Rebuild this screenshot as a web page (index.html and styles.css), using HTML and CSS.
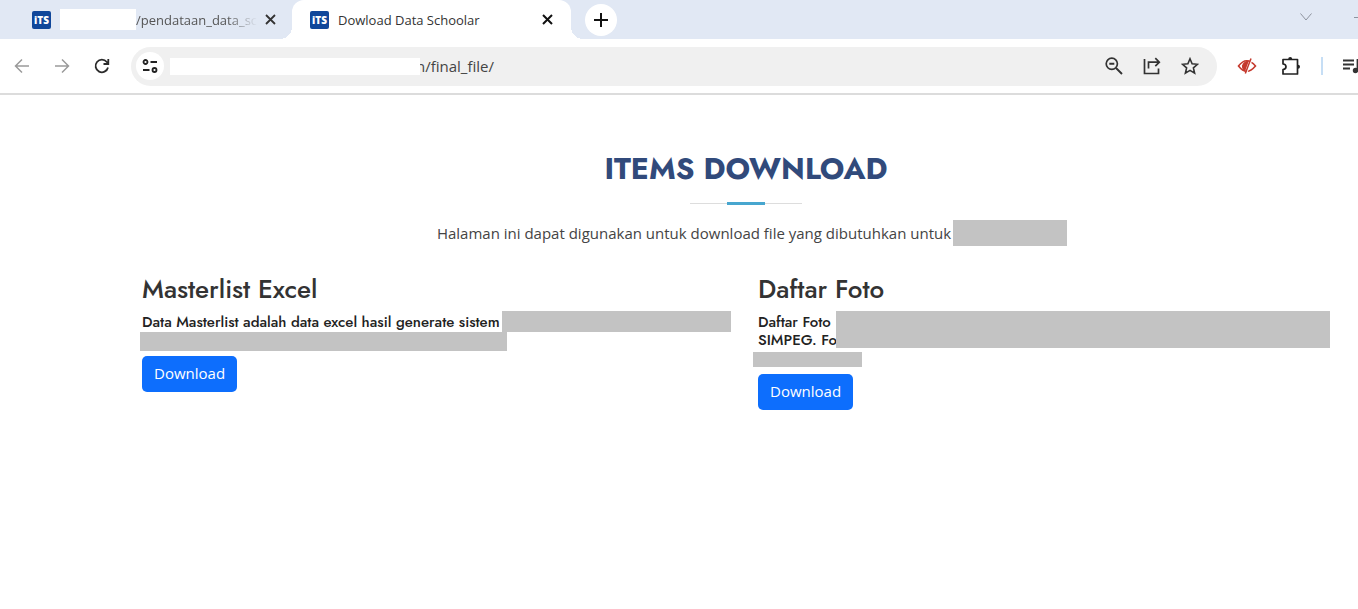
FILE: index.html
```html
<!DOCTYPE html>
<html lang="id">
<head>
  <meta charset="UTF-8">
  <meta name="viewport" content="width=device-width, initial-scale=1">
  <title>Dowload Data Schoolar</title>
  <link rel="stylesheet" href="styles.css">
</head>
<body>

  <header class="browser">
    <div class="tab-strip">
      <div class="tab">
        <span class="favicon">iTS</span>
        <span class="tab-mask"></span>
        <span class="tab-title tab-title-fade">/pendataan_data_sc</span>
        <button class="icon-btn tab-close" aria-label="Tutup tab">
          <svg width="11" height="11" viewBox="0 0 11 11"><path d="M1 1l9 9M10 1l-9 9" stroke="#333" stroke-width="1.8"/></svg>
        </button>
      </div>
      <div class="tab tab-active">
        <span class="favicon">iTS</span>
        <span class="tab-title">Dowload Data Schoolar</span>
        <button class="icon-btn tab-close" aria-label="Tutup tab">
          <svg width="11" height="11" viewBox="0 0 11 11"><path d="M1 1l9 9M10 1l-9 9" stroke="#111" stroke-width="2"/></svg>
        </button>
      </div>
      <button class="icon-btn new-tab" aria-label="Tab baru">
        <svg width="14" height="14" viewBox="0 0 14 14"><path d="M7 0v14M0 7h14" stroke="#111" stroke-width="2"/></svg>
      </button>
      <div class="window-controls">
        <button class="icon-btn" aria-label="Cari tab">
          <svg width="12" height="8" viewBox="0 0 12 8"><path d="M.5 .5L6 7l5.500-6.500" fill="none" stroke="#8d939e" stroke-width="1"/></svg>
        </button>
        <button class="icon-btn" aria-label="Minimalkan">
          <svg width="12" height="8" viewBox="0 0 12 8"><path d="M0 4.500h12" stroke="#8d939e"/></svg>
        </button>
      </div>
    </div>

    <div class="toolbar">
      <div class="nav-buttons">
        <button class="icon-btn" aria-label="Kembali">
          <svg width="16" height="16" viewBox="0 0 16 16"><path d="M15 8H2M8 1.500L1.500 8 8 14.500" fill="none" stroke="#9a9a9a" stroke-width="1.500"/></svg>
        </button>
        <button class="icon-btn" aria-label="Maju">
          <svg width="16" height="16" viewBox="0 0 16 16"><path d="M1 8h13M8 1.500L14.500 8 8 14.500" fill="none" stroke="#9a9a9a" stroke-width="1.500"/></svg>
        </button>
        <button class="icon-btn" aria-label="Muat ulang">
          <svg width="16" height="16" viewBox="0 0 16 16"><path d="M14 9.500A6.300 6.300 0 1 1 12.800 4l1.500 1.700M14.300 1v5H9.500" fill="none" stroke="#2b2b2b" stroke-width="1.800"/></svg>
        </button>
      </div>

      <div class="omnibox">
        <button class="icon-btn site-info" aria-label="Informasi situs">
          <svg width="16" height="14" viewBox="0 0 16 14" fill="none" stroke="#222" stroke-width="1.800"><circle cx="3.500" cy="3" r="2"/><path d="M8.500 3H15M1 11h6.500"/><circle cx="12.500" cy="11" r="2"/></svg>
        </button>
        <span class="url-mask"></span>
        <input class="url" type="text" value="n/final_file/" aria-label="Alamat">
        <div class="omnibox-actions">
          <button class="icon-btn" aria-label="Perkecil">
            <svg width="18" height="18" viewBox="0 0 18 18" fill="none" stroke="#333"><circle cx="6.800" cy="6.800" r="5.600" stroke-width="1.700"/><path d="M11 11l6 6M4.300 6.800h5" stroke-width="1.900"/></svg>
          </button>
          <button class="icon-btn" aria-label="Bagikan">
            <svg width="18" height="18" viewBox="0 0 18 18" fill="none" stroke="#333" stroke-width="1.700"><path d="M1.500 2v14.500h14V11.500M5.500 11.500V5.200H16M12.300 1.200l4 4-4 4"/></svg>
          </button>
          <button class="icon-btn" aria-label="Tandai halaman">
            <svg width="18" height="18" viewBox="0 0 18 18"><path d="M9 1.800l2.100 5 5.400.5-4.100 3.600 1.200 5.300L9 13.400l-4.600 2.800 1.200-5.300L1.500 7.300l5.400-.5z" fill="none" stroke="#333" stroke-width="1.600"/></svg>
          </button>
        </div>
      </div>

      <div class="extensions">
        <button class="icon-btn" aria-label="Ekstensi privasi">
          <svg width="20" height="16" viewBox="0 0 20 16"><path d="M1.500 8Q9.500-2.500 18.500 8 9.500 18.500 1.500 8z" fill="none" stroke="#c5392d" stroke-width="1.600"/><path d="M12 2.500L8 13.500Q4.500 11 5 7.500 6.500 3 12 2.500z" fill="#c5392d"/><path d="M15 1L9.500 15" stroke="#fff" stroke-width="1.500"/><path d="M14 0.500L8.300 15.500" stroke="#c5392d" stroke-width="1.500"/></svg>
        </button>
        <button class="icon-btn" aria-label="Ekstensi">
          <svg width="20" height="20" viewBox="0 0 20 20"><path d="M2 3.500h14.500v14.500H2v-4.400q3-.3 3-2.800T2 8z" fill="none" stroke="#222" stroke-width="1.700" stroke-linejoin="round"/><path d="M7.200 3a2 2 0 0 1 4 0zM17 8.800a2 2 0 0 1 0 4z" fill="#222"/></svg>
        </button>
        <span class="divider"></span>
        <button class="icon-btn" aria-label="Kontrol media">
          <svg width="20" height="16" viewBox="0 0 20 16"><path d="M0 2.500h11M0 6.500h11M0 10.500h7M14.500 12.500V2H19" fill="none" stroke="#333" stroke-width="1.800"/><circle cx="12.500" cy="12.500" r="2.700" fill="#333"/></svg>
        </button>
      </div>
    </div>
  </header>

  <main class="page">
    <section class="section-title">
      <h1>Items Download</h1>
      <p>Halaman ini dapat digunakan untuk download file yang dibutuhkan untuk <span class="mask mask-intro"></span></p>
    </section>

    <section class="items">
      <article class="item">
        <h2>Masterlist Excel</h2>
        <div class="desc">
          <p>Data Masterlist adalah data excel hasil generate sistem</p>
          <span class="mask mask-line"></span>
        </div>
        <span class="mask mask-second"></span>
        <button class="btn">Download</button>
      </article>

      <article class="item">
        <h2>Daftar Foto</h2>
        <div class="desc">
          <p class="desc-short">Daftar Foto<br>SIMPEG. Fo</p>
          <span class="mask mask-block"></span>
        </div>
        <span class="mask mask-third"></span>
        <button class="btn">Download</button>
      </article>
    </section>
  </main>

</body>
</html>
```

FILE: styles.css
```css
* {
  box-sizing: border-box;
}
body {
  margin: 0;
  overflow-x: hidden;
  background: #fff;
  color: #444;
  font-family: "Open Sans", "Noto Sans", sans-serif;
}
h1, h2, p {
  margin: 0;
}
button, input {
  font: inherit;
  border: 0;
  padding: 0;
  background: none;
}
.icon-btn {
  display: flex;
  align-items: center;
  justify-content: center;
  flex-shrink: 0;
}
svg {
  display: block;
}

/* browser bar */
.browser {
  overflow: hidden;
  border-bottom: 2px solid #dcdcdc;
}
.tab-strip {
  display: flex;
  align-items: center;
  height: 39px;
  background: #e1e8f4;
}
.tab {
  display: flex;
  align-items: center;
  width: 292px;
  height: 39px;
  padding: 0 16px 0 32px;
  font-size: 13px;
  color: #555;
}
.tab-active {
  position: relative;
  width: 279px;
  padding: 0 18px;
  background: #fff;
  color: #333;
  border-radius: 12px 12px 0 0;
}
.tab-active::before,
.tab-active::after {
  content: "";
  position: absolute;
  bottom: 0;
  width: 12px;
  height: 12px;
}
.tab-active::before {
  right: 100%;
  background: radial-gradient(circle at 0 0, transparent 12px, #fff 12px);
}
.tab-active::after {
  left: 100%;
  background: radial-gradient(circle at 100% 0, transparent 12px, #fff 12px);
}
.favicon {
  flex-shrink: 0;
  width: 19px;
  height: 18px;
  margin-right: 9px;
  border-radius: 2px;
  background: #10479a;
  color: #fff;
  font-size: 10px;
  font-weight: 800;
  line-height: 18px;
  text-align: center;
}
.tab-mask {
  flex-shrink: 0;
  width: 76px;
  height: 21px;
  background: #fff;
}
.tab-title {
  flex: 1;
  overflow: hidden;
  white-space: nowrap;
}
.tab-title-fade {
  -webkit-mask-image: linear-gradient(to right, #000 75%, transparent);
  mask-image: linear-gradient(to right, #000 75%, transparent);
}
.tab-close {
  width: 11px;
  margin-left: 8px;
}
.new-tab {
  width: 32px;
  height: 32px;
  margin-left: 14px;
  border-radius: 50%;
  background: #fff;
}
.window-controls {
  display: flex;
  gap: 42px;
  margin: 0 -8px 6px auto;
}
.toolbar {
  display: flex;
  align-items: center;
  height: 54px;
}
.nav-buttons {
  display: flex;
  gap: 24px;
  padding: 0 21px 0 14px;
}
.omnibox {
  display: flex;
  align-items: center;
  flex: 1;
  min-width: 0;
  height: 39px;
  padding: 0 18px 0 5px;
  border-radius: 20px;
  background: #f0f0f0;
}
.site-info {
  width: 28px;
  height: 28px;
  border-radius: 50%;
  background: #fff;
}
.url-mask {
  position: relative;
  z-index: 1;
  flex-shrink: 0;
  width: 250px;
  height: 17px;
  margin-left: 6px;
  background: #fff;
}
.url {
  flex: 1;
  min-width: 0;
  margin-left: -4px;
  color: #444;
  font-size: 15px;
  outline: none;
}
.omnibox-actions {
  display: flex;
  gap: 20px;
}
.extensions {
  display: flex;
  align-items: center;
  gap: 20px;
  margin: 0 -5px 0 20px;
}
.extensions .icon-btn:nth-child(2) {
  margin-left: 4px;
}
.divider {
  width: 2px;
  height: 18px;
  background: #c6def5;
}

/* page */
.page {
  padding: 53px 8px 40px 142px;
}
.section-title {
  text-align: center;
}
.section-title h1 {
  position: relative;
  padding-bottom: 16px;
  color: #314a7b;
  font-family: Jost, Lato, sans-serif;
  font-size: 30px;
  font-weight: 700;
  line-height: 42px;
  text-transform: uppercase;
}
.section-title h1::before,
.section-title h1::after {
  content: "";
  position: absolute;
  left: 50%;
  transform: translateX(-50%);
}
.section-title h1::before {
  bottom: 2px;
  width: 112px;
  height: 1px;
  background: #ddd;
}
.section-title h1::after {
  bottom: 1px;
  width: 38px;
  height: 3px;
  background: #47a6cf;
}
.section-title p {
  display: flex;
  align-items: center;
  justify-content: center;
  gap: 2px;
  height: 26px;
  margin-top: 14px;
  padding-left: 12px;
  font-size: 15px;
  line-height: 22px;
}
.mask {
  display: block;
  position: relative;
  flex-shrink: 0;
  background: #c3c3c3;
}
.mask-intro {
  width: 114px;
  height: 26px;
}
.items {
  display: grid;
  grid-template-columns: 1fr 1fr;
  gap: 24px;
  margin-top: 26px;
}
.item h2 {
  color: #333;
  font-family: Jost, Lato, sans-serif;
  font-size: 26px;
  font-weight: 500;
  line-height: 34px;
}
.desc {
  display: flex;
  margin-top: 5px;
  color: #222;
  font-family: Jost, Lato, sans-serif;
  font-size: 15px;
  font-weight: 500;
  line-height: 18px;
  white-space: nowrap;
}
.desc p {
  width: 360px;
  padding-top: 2px;
}
.desc .desc-short {
  width: 78px;
}
.mask-line {
  width: 229px;
  height: 21px;
}
.mask-second {
  width: 367px;
  height: 19px;
  margin-left: -2px;
}
.mask-block {
  width: 494px;
  height: 37px;
}
.mask-third {
  width: 109px;
  height: 15px;
  margin: 3px 0 7px -5px;
}
.btn {
  height: 36px;
  padding: 0 12px 2px;
  border-radius: 5px;
  background: #0d6efd;
  color: #fff;
  font-size: 15px;
  cursor: pointer;
}
.mask-second + .btn {
  margin-top: 5px;
}
```
